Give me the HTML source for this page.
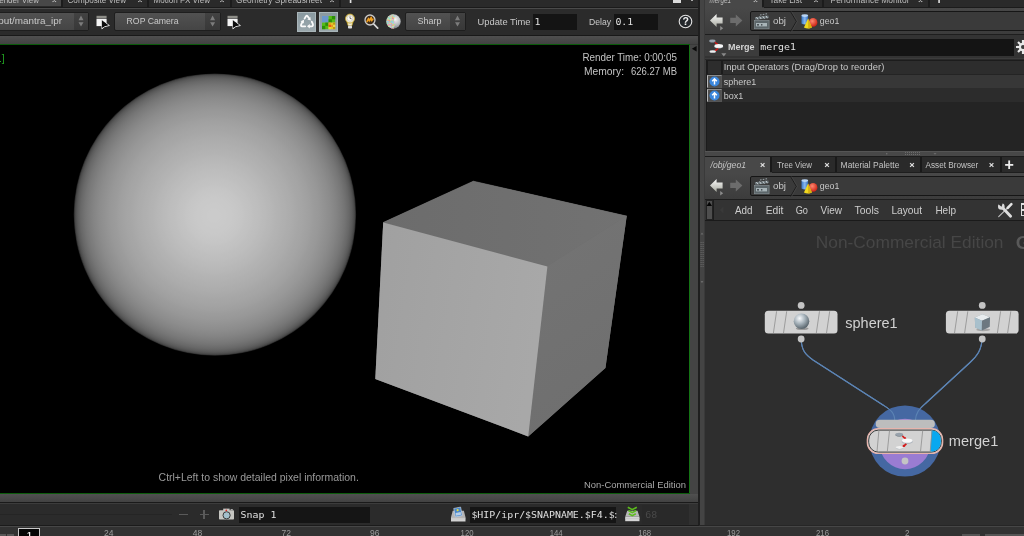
<!DOCTYPE html>
<html><head><meta charset="utf-8"><title>Houdini</title>
<style>
html,body{margin:0;padding:0;background:#3a3a3a;}
#root{position:relative;width:1024px;height:536px;overflow:hidden;background:#3a3a3a;font-family:'Liberation Sans', sans-serif;will-change:transform;}
#root div,#root svg{box-sizing:border-box;}
svg{position:absolute;overflow:visible;}
text{white-space:pre;}
</style></head><body><div id="root">
<div style="position:absolute;left:0px;top:0px;width:699px;height:7px;background:#2a2a2a;"></div>
<div style="position:absolute;left:0px;top:0px;width:61px;height:6.2px;background:#484848;"></div>
<div style="position:absolute;left:61px;top:0px;width:2px;height:7px;background:#1c1c1c;"></div>
<div style="position:absolute;left:146.5px;top:0px;width:2px;height:7px;background:#1c1c1c;"></div>
<div style="position:absolute;left:229.5px;top:0px;width:2px;height:7px;background:#1c1c1c;"></div>
<div style="position:absolute;left:339px;top:0px;width:2px;height:7px;background:#1c1c1c;"></div>
<div style="position:absolute;left:0px;top:7px;width:699px;height:1px;background:#1b1b1b;"></div>
<div style="position:absolute;left:61px;top:7px;width:638px;height:1px;background:#1b1b1b;"></div>
<div style="position:absolute;left:0px;top:8px;width:698px;height:1px;background:#4a4a4a;"></div>
<svg style="left:0;top:0" width="1024" height="536"><path d="M52.599999999999994,-1.5 L56.0,1.9 M56.0,-1.5 L52.599999999999994,1.9" stroke="#bcbcbc" stroke-width="1.1" fill="none"/></svg>
<svg style="left:0;top:0" width="1024" height="536"><path d="M138.3,-1.5 L141.7,1.9 M141.7,-1.5 L138.3,1.9" stroke="#bcbcbc" stroke-width="1.1" fill="none"/></svg>
<svg style="left:0;top:0" width="1024" height="536"><path d="M220.3,-1.5 L223.7,1.9 M223.7,-1.5 L220.3,1.9" stroke="#bcbcbc" stroke-width="1.1" fill="none"/></svg>
<svg style="left:0;top:0" width="1024" height="536"><path d="M330.3,-1.5 L333.7,1.9 M333.7,-1.5 L330.3,1.9" stroke="#bcbcbc" stroke-width="1.1" fill="none"/></svg>
<div style="position:absolute;left:672.5px;top:0px;width:8.5px;height:2.5px;background:#dcdcdc;"></div>
<div style="position:absolute;left:691px;top:0px;width:1.5px;height:1px;background:#aaa;"></div>
<div style="position:absolute;left:0px;top:9px;width:699px;height:26px;background:#2b2b2b;"></div>
<div style="position:absolute;left:0px;top:35px;width:699px;height:1px;background:#191919;"></div>
<div style="position:absolute;left:0px;top:36px;width:699px;height:8px;background:linear-gradient(#4f4f4f,#424242);"></div>
<div style="position:absolute;left:0px;top:43.7px;width:690px;height:1.5px;background:linear-gradient(#0a520a,#0a620a);"></div>
<div style="position:absolute;left:0px;top:45px;width:689px;height:448px;background:#000;"></div>
<div style="position:absolute;left:688.8px;top:45px;width:1.4px;height:449px;background:#147414;"></div>
<div style="position:absolute;left:0px;top:493px;width:690px;height:1px;background:#0c5c0c;"></div>
<div style="position:absolute;left:690px;top:45px;width:8px;height:449px;background:#444;"></div>
<div style="position:absolute;left:0px;top:494px;width:698px;height:8px;background:linear-gradient(#505050,#424242);"></div>
<div style="position:absolute;left:0px;top:502px;width:698px;height:1px;background:#1a1a1a;"></div>
<div style="position:absolute;left:0px;top:503px;width:698px;height:1px;background:#3c3c3c;"></div>
<div style="position:absolute;left:0px;top:504px;width:698px;height:21px;background:#2b2b2b;"></div>
<div style="position:absolute;left:698px;top:0px;width:1.7px;height:526px;background:#1f1f1f;"></div>
<div style="position:absolute;left:699.7px;top:0px;width:4.6px;height:526px;background:#444;"></div>
<div style="position:absolute;left:704.2px;top:0px;width:0.5px;height:526px;background:#3a3a3a;"></div>
<svg style="left:0;top:0" width="1024" height="536"><g fill="#6a6a6a"><rect x="700.6" y="242" width="1" height="1"/><rect x="702.6" y="242" width="1" height="1"/><rect x="700.6" y="244" width="1" height="1"/><rect x="702.6" y="244" width="1" height="1"/><rect x="700.6" y="246" width="1" height="1"/><rect x="702.6" y="246" width="1" height="1"/><rect x="700.6" y="248" width="1" height="1"/><rect x="702.6" y="248" width="1" height="1"/><rect x="700.6" y="250" width="1" height="1"/><rect x="702.6" y="250" width="1" height="1"/><rect x="700.6" y="252" width="1" height="1"/><rect x="702.6" y="252" width="1" height="1"/><rect x="700.6" y="254" width="1" height="1"/><rect x="702.6" y="254" width="1" height="1"/><rect x="700.6" y="256" width="1" height="1"/><rect x="702.6" y="256" width="1" height="1"/><rect x="700.6" y="258" width="1" height="1"/><rect x="702.6" y="258" width="1" height="1"/><rect x="700.6" y="260" width="1" height="1"/><rect x="702.6" y="260" width="1" height="1"/><rect x="700.6" y="262" width="1" height="1"/><rect x="702.6" y="262" width="1" height="1"/><rect x="700.6" y="264" width="1" height="1"/><rect x="702.6" y="264" width="1" height="1"/><rect x="700.6" y="266" width="1" height="1"/><rect x="702.6" y="266" width="1" height="1"/><path d="M700.6,234.6 L703.4,234.6 L702,232.4 Z"/><path d="M700.6,281 L703.4,281 L702,283.2 Z"/></g></svg>
<div style="position:absolute;left:-20px;top:12px;width:109px;height:18.5px;background:linear-gradient(#515151,#454545);border:1px solid #1e1e1e;border-radius:2px;"></div>
<div style="position:absolute;left:74px;top:13px;width:14px;height:16.5px;background:linear-gradient(#424242,#383838);"></div>
<svg style="left:0;top:0" width="1024" height="536"><path d="M78.5,20.2 L81.0,15.6 L83.5,20.2 Z M78.5,22.2 L81.0,26.6 L83.5,22.2 Z" fill="#7c7c7c"/></svg>
<div style="position:absolute;left:113.9px;top:12px;width:107.29999999999998px;height:18.5px;background:linear-gradient(#515151,#454545);border:1px solid #1e1e1e;border-radius:2px;"></div>
<div style="position:absolute;left:205px;top:13px;width:15.199999999999989px;height:16.5px;background:linear-gradient(#424242,#383838);"></div>
<svg style="left:0;top:0" width="1024" height="536"><path d="M210.1,20.2 L212.6,15.6 L215.1,20.2 Z M210.1,22.2 L212.6,26.6 L215.1,22.2 Z" fill="#7c7c7c"/></svg>
<div style="position:absolute;left:404.8px;top:12px;width:61.19999999999999px;height:18.5px;background:linear-gradient(#515151,#454545);border:1px solid #1e1e1e;border-radius:2px;"></div>
<div style="position:absolute;left:450px;top:13px;width:15px;height:16.5px;background:linear-gradient(#424242,#383838);"></div>
<svg style="left:0;top:0" width="1024" height="536"><path d="M455.0,20.2 L457.5,15.6 L460.0,20.2 Z M455.0,22.2 L457.5,26.6 L460.0,22.2 Z" fill="#7c7c7c"/></svg>
<svg style="left:95.5px;top:15px" width="16" height="16" viewBox="0 0 16 16">
<rect x="0.5" y="0.8" width="10.1" height="2.2" fill="#8e8e88"/>
<rect x="0.5" y="3.7" width="10.1" height="7.4" fill="#f4f4f4"/>
<path d="M5.9,5.3 L5.9,13.9 L8.6,11.7 L13.4,10.5 Z" fill="#0c0c0c" stroke="#f0f0f0" stroke-width="0.9" stroke-linejoin="round"/>
<path d="M5.9,5.3 L5.9,12.6 L8.3,10.9 L12,10 Z" fill="#0c0c0c"/>
</svg>
<svg style="left:226.7px;top:15px" width="16" height="16" viewBox="0 0 16 16">
<rect x="0.5" y="0.8" width="10.1" height="2.2" fill="#8e8e88"/>
<rect x="0.5" y="3.7" width="10.1" height="7.4" fill="#f4f4f4"/>
<path d="M5.9,5.3 L5.9,13.9 L8.6,11.7 L13.4,10.5 Z" fill="#0c0c0c" stroke="#f0f0f0" stroke-width="0.9" stroke-linejoin="round"/>
<path d="M5.9,5.3 L5.9,12.6 L8.3,10.9 L12,10 Z" fill="#0c0c0c"/>
</svg>
<div style="position:absolute;left:297px;top:12px;width:19px;height:19.5px;background:linear-gradient(#8999a0,#9ba8ad);border:1px solid #a9b5b9;"></div>
<div style="position:absolute;left:318.7px;top:12px;width:19.3px;height:19.5px;background:linear-gradient(#8999a0,#9ba8ad);border:1px solid #a9b5b9;"></div>
<svg style="left:297.5px;top:12.3px" width="18" height="18" viewBox="0 0 18 18">
<g fill="none" stroke="#fafafa" stroke-width="1.8" stroke-linejoin="round" stroke-linecap="round">
<path d="M6.6,6.6 L8,4.2 Q8.8,3.2 9.6,4.2 L10.6,5.8"/>
<path d="M13.8,9.6 L14.9,12.2 Q15.4,14.2 13.4,14.3 L11.6,14.3"/>
<path d="M7.2,14.3 L4.2,14.3 Q2.4,14.1 3.2,12.4 L4.2,10.4"/>
</g>
<g fill="#fafafa"><path d="M12.8,8.4 L9.4,7.4 L12.3,4.8 Z"/><path d="M9,14.3 L11.8,12 L11.8,16.6 Z"/><path d="M6,7.8 L2.6,9.2 L5.8,11.6 Z"/></g>
</svg>
<svg style="left:321.8px;top:15.6px" width="13.2" height="13.2" viewBox="0 0 12 12">
<rect x="0" y="0" width="6" height="6" fill="#6a96cc"/>
<rect x="6" y="0" width="6" height="6" fill="#58bc18"/><rect x="9" y="0" width="3" height="3" fill="#2c9008"/><rect x="6" y="3" width="3" height="3" fill="#2c9008"/>
<rect x="0" y="6" width="6" height="6" fill="#58bc18"/><rect x="3" y="6" width="3" height="3" fill="#2c9008"/><rect x="0" y="9" width="3" height="3" fill="#2c9008"/>
<rect x="6" y="6" width="6" height="6" fill="#e4c828"/>
<rect x="6" y="6" width="2" height="2" fill="#e8a020"/><rect x="10" y="6" width="2" height="2" fill="#c09810"/>
<rect x="6" y="8" width="2.4" height="2" fill="#ee5a10"/><rect x="8.4" y="8" width="1.6" height="2" fill="#e89028"/><rect x="10" y="8" width="2" height="2" fill="#ecd840"/>
<rect x="6" y="10" width="2" height="2" fill="#e8d838"/><rect x="10" y="10" width="2" height="2" fill="#c09810"/>
</svg>
<svg style="left:343px;top:12px" width="14" height="18" viewBox="0 0 14 18">
<path d="M3.9,9.8 L5.1,13.6 L8.9,13.6 L10.1,9.8 Z" fill="#f0ecd8" stroke="#c4a428" stroke-width="0.8"/>
<circle cx="7" cy="6.6" r="4.5" fill="#f2eedc" stroke="#c4a428" stroke-width="0.9"/>
<circle cx="7" cy="6.4" r="2.9" fill="#fafafa" stroke="#b8b098" stroke-width="0.5"/>
<path d="M7,4.4 L7,6.4 L8.6,6.9" stroke="#555" stroke-width="0.8" fill="none"/>
<rect x="5" y="13.6" width="4" height="2.9" rx="0.8" fill="#dedede"/>
</svg>
<svg style="left:362px;top:12px" width="18" height="18" viewBox="0 0 18 18">
<line x1="11.8" y1="12.2" x2="15.7" y2="16.1" stroke="#d8d8d8" stroke-width="1.7" stroke-linecap="round"/>
<circle cx="8" cy="8" r="5" fill="#3e2c1a" stroke="#cccccc" stroke-width="1.3"/>
<path d="M5,9.6 L6.6,6.4 L7.4,9 L9.2,5.2 L9.6,8.8 L11,7" stroke="#f0a020" stroke-width="1.5" fill="none" stroke-linejoin="round" stroke-linecap="round"/>
</svg>
<svg style="left:385.9px;top:14.4px" width="15" height="15" viewBox="0 0 15 15">
<defs><radialGradient id="bg1" cx="0.62" cy="0.36" r="0.7"><stop offset="0" stop-color="#f6f6f6"/><stop offset="0.55" stop-color="#b4b8bc"/><stop offset="1" stop-color="#6c7278"/></radialGradient>
<clipPath id="bc1"><circle cx="7.5" cy="7.5" r="7.2"/></clipPath></defs>
<circle cx="7.5" cy="7.5" r="7.2" fill="url(#bg1)"/>
<g clip-path="url(#bc1)"><rect x="0" y="0" width="7.6" height="15" fill="#c0d4b8"/><rect x="2.9" y="2.9" width="1.5" height="1.5" fill="#f0a0e0"/><rect x="0.9" y="12.0" width="1.5" height="1.5" fill="#a0b8f0"/><rect x="3.2" y="1.6" width="1.5" height="1.5" fill="#88d8f0"/><rect x="2.1" y="2.0" width="1.5" height="1.5" fill="#a8e890"/><rect x="1.1" y="2.0" width="1.5" height="1.5" fill="#a8e890"/><rect x="1.0" y="8.5" width="1.5" height="1.5" fill="#90e8c8"/><rect x="5.0" y="8.7" width="1.5" height="1.5" fill="#e8a0b8"/><rect x="4.6" y="6.2" width="1.5" height="1.5" fill="#90e8c8"/><rect x="0.9" y="12.5" width="1.5" height="1.5" fill="#f0b880"/><rect x="3.5" y="8.2" width="1.5" height="1.5" fill="#e0e0a0"/><rect x="2.8" y="11.9" width="1.5" height="1.5" fill="#f0e890"/><rect x="1.3" y="8.6" width="1.5" height="1.5" fill="#90e8c8"/><rect x="3.2" y="8.2" width="1.5" height="1.5" fill="#a0b8f0"/><rect x="4.6" y="9.2" width="1.5" height="1.5" fill="#f08888"/><rect x="5.4" y="6.6" width="1.5" height="1.5" fill="#c8a0e8"/><rect x="3.9" y="13.4" width="1.5" height="1.5" fill="#c8a0e8"/><rect x="2.7" y="11.6" width="1.5" height="1.5" fill="#b0f0b0"/><rect x="6.1" y="1.9" width="1.5" height="1.5" fill="#f0b880"/><rect x="4.3" y="12.7" width="1.5" height="1.5" fill="#b0f0b0"/><rect x="3.7" y="9.1" width="1.5" height="1.5" fill="#a0b8f0"/><rect x="1.4" y="6.5" width="1.5" height="1.5" fill="#c8a0e8"/><rect x="1.7" y="7.4" width="1.5" height="1.5" fill="#e8a0b8"/><rect x="7.3" y="1.9" width="1.5" height="1.5" fill="#88d8f0"/><rect x="4.6" y="12.7" width="1.5" height="1.5" fill="#c8a0e8"/><rect x="3.0" y="5.6" width="1.5" height="1.5" fill="#f08888"/><rect x="4.7" y="7.0" width="1.5" height="1.5" fill="#a0b8f0"/><rect x="7.2" y="7.2" width="1.5" height="1.5" fill="#f0a0e0"/><rect x="1.1" y="10.7" width="1.5" height="1.5" fill="#f0b880"/><rect x="5.1" y="14.3" width="1.5" height="1.5" fill="#f08888"/><rect x="2.6" y="6.0" width="1.5" height="1.5" fill="#f0a0e0"/><rect x="3.0" y="13.6" width="1.5" height="1.5" fill="#c8a0e8"/><rect x="1.8" y="2.4" width="1.5" height="1.5" fill="#e8a0b8"/><rect x="2.1" y="4.7" width="1.5" height="1.5" fill="#b0f0b0"/><rect x="2.3" y="6.1" width="1.5" height="1.5" fill="#f08888"/><rect x="1.2" y="6.9" width="1.5" height="1.5" fill="#88d8f0"/><rect x="2.5" y="2.7" width="1.5" height="1.5" fill="#a8e890"/><rect x="6.6" y="4.6" width="1.5" height="1.5" fill="#a8e890"/><rect x="7.5" y="10.1" width="1.5" height="1.5" fill="#a8e890"/><rect x="7.3" y="2.9" width="1.5" height="1.5" fill="#f0e890"/><rect x="1.7" y="9.8" width="1.5" height="1.5" fill="#e8a0b8"/><rect x="4.0" y="8.8" width="1.5" height="1.5" fill="#f0b880"/><rect x="2.6" y="2.8" width="1.5" height="1.5" fill="#88d8f0"/><rect x="3.2" y="8.5" width="1.5" height="1.5" fill="#f0e890"/><rect x="5.4" y="7.8" width="1.5" height="1.5" fill="#e0e0a0"/><rect x="5.2" y="10.9" width="1.5" height="1.5" fill="#f08888"/><rect x="6.9" y="11.4" width="1.5" height="1.5" fill="#f0a0e0"/><rect x="6.2" y="6.1" width="1.5" height="1.5" fill="#a8e890"/><rect x="3.4" y="7.3" width="1.5" height="1.5" fill="#a8e890"/><rect x="1.0" y="1.7" width="1.5" height="1.5" fill="#90e8c8"/><rect x="3.7" y="2.3" width="1.5" height="1.5" fill="#e0e0a0"/><rect x="1.0" y="0.8" width="1.5" height="1.5" fill="#f0e890"/><rect x="4.4" y="13.7" width="1.5" height="1.5" fill="#e0e0a0"/><rect x="0.8" y="12.7" width="1.5" height="1.5" fill="#e0e0a0"/><rect x="3.2" y="9.4" width="1.5" height="1.5" fill="#c8a0e8"/><rect x="4.8" y="7.2" width="1.5" height="1.5" fill="#a0b8f0"/><rect x="6.5" y="14.3" width="1.5" height="1.5" fill="#f08888"/><rect x="4.0" y="5.0" width="1.5" height="1.5" fill="#f0e890"/><rect x="1.3" y="5.5" width="1.5" height="1.5" fill="#f0b880"/><rect x="4.0" y="10.2" width="1.5" height="1.5" fill="#88d8f0"/><rect x="0.8" y="13.7" width="1.5" height="1.5" fill="#88d8f0"/><rect x="3.1" y="10.2" width="1.5" height="1.5" fill="#e8a0b8"/><rect x="5.9" y="4.9" width="1.5" height="1.5" fill="#f0a0e0"/><rect x="6.6" y="10.3" width="1.5" height="1.5" fill="#f0b880"/><rect x="4.2" y="13.2" width="1.5" height="1.5" fill="#c8a0e8"/><rect x="6.0" y="8.0" width="1.5" height="1.5" fill="#88d8f0"/><rect x="2.9" y="3.8" width="1.5" height="1.5" fill="#90e8c8"/><rect x="6.2" y="11.9" width="1.5" height="1.5" fill="#b0f0b0"/><rect x="6.2" y="3.5" width="1.5" height="1.5" fill="#f08888"/><rect x="3.1" y="1.2" width="1.5" height="1.5" fill="#e8a0b8"/><rect x="6.1" y="7.2" width="1.5" height="1.5" fill="#90e8c8"/><rect x="7.6" y="0" width="8" height="15" fill="url(#bg1)" opacity="0"/></g>
</svg>
<div style="position:absolute;left:533px;top:14px;width:44px;height:16.3px;background:#141414;"></div>
<div style="position:absolute;left:614.3px;top:14px;width:43.7px;height:16.3px;background:#141414;"></div>
<svg style="left:677.5px;top:13.5px" width="15" height="15" viewBox="0 0 15 15">
<circle cx="7.5" cy="7.5" r="6.3" fill="#23272b" stroke="#e4e4e4" stroke-width="1.1"/></svg>
<div style="position:absolute;left:0px;top:60.5px;width:1px;height:1.2px;background:#22a022;"></div>
<svg style="left:690px;top:45px" width="8" height="8"><path d="M6.6,1 L6.6,6.4 L1.8,3.7 Z" fill="#0a0a0a"/></svg>
<svg style="left:0;top:0" width="700" height="536" viewBox="0 0 700 536">
<defs><radialGradient id="sg" cx="0.5" cy="0.5" r="0.5" fx="0.497" fy="0.504"><stop offset="0.000" stop-color="rgb(203,203,203)"/><stop offset="0.020" stop-color="rgb(203,203,203)"/><stop offset="0.040" stop-color="rgb(203,203,203)"/><stop offset="0.060" stop-color="rgb(202,202,202)"/><stop offset="0.080" stop-color="rgb(202,202,202)"/><stop offset="0.100" stop-color="rgb(201,201,201)"/><stop offset="0.120" stop-color="rgb(201,201,201)"/><stop offset="0.140" stop-color="rgb(200,200,200)"/><stop offset="0.160" stop-color="rgb(199,199,199)"/><stop offset="0.180" stop-color="rgb(198,198,198)"/><stop offset="0.200" stop-color="rgb(197,197,197)"/><stop offset="0.220" stop-color="rgb(195,195,195)"/><stop offset="0.240" stop-color="rgb(194,194,194)"/><stop offset="0.260" stop-color="rgb(193,193,193)"/><stop offset="0.280" stop-color="rgb(191,191,191)"/><stop offset="0.300" stop-color="rgb(190,190,190)"/><stop offset="0.320" stop-color="rgb(189,189,189)"/><stop offset="0.340" stop-color="rgb(187,187,187)"/><stop offset="0.360" stop-color="rgb(186,186,186)"/><stop offset="0.380" stop-color="rgb(184,184,184)"/><stop offset="0.400" stop-color="rgb(183,183,183)"/><stop offset="0.420" stop-color="rgb(181,181,181)"/><stop offset="0.440" stop-color="rgb(179,179,179)"/><stop offset="0.460" stop-color="rgb(178,178,178)"/><stop offset="0.480" stop-color="rgb(176,176,176)"/><stop offset="0.500" stop-color="rgb(175,175,175)"/><stop offset="0.520" stop-color="rgb(173,173,173)"/><stop offset="0.540" stop-color="rgb(172,172,172)"/><stop offset="0.560" stop-color="rgb(170,170,170)"/><stop offset="0.580" stop-color="rgb(168,168,168)"/><stop offset="0.600" stop-color="rgb(166,166,166)"/><stop offset="0.620" stop-color="rgb(165,165,165)"/><stop offset="0.640" stop-color="rgb(163,163,163)"/><stop offset="0.660" stop-color="rgb(161,161,161)"/><stop offset="0.680" stop-color="rgb(159,159,159)"/><stop offset="0.700" stop-color="rgb(156,156,156)"/><stop offset="0.720" stop-color="rgb(154,154,154)"/><stop offset="0.740" stop-color="rgb(152,152,152)"/><stop offset="0.760" stop-color="rgb(149,149,149)"/><stop offset="0.780" stop-color="rgb(146,146,146)"/><stop offset="0.800" stop-color="rgb(143,143,143)"/><stop offset="0.820" stop-color="rgb(140,140,140)"/><stop offset="0.840" stop-color="rgb(136,136,136)"/><stop offset="0.860" stop-color="rgb(132,132,132)"/><stop offset="0.880" stop-color="rgb(127,127,127)"/><stop offset="0.900" stop-color="rgb(122,122,122)"/><stop offset="0.910" stop-color="rgb(119,119,119)"/><stop offset="0.920" stop-color="rgb(116,116,116)"/><stop offset="0.930" stop-color="rgb(112,112,112)"/><stop offset="0.940" stop-color="rgb(108,108,108)"/><stop offset="0.950" stop-color="rgb(104,104,104)"/><stop offset="0.960" stop-color="rgb(98,98,98)"/><stop offset="0.970" stop-color="rgb(92,92,92)"/><stop offset="0.980" stop-color="rgb(83,83,83)"/><stop offset="0.990" stop-color="rgb(70,70,70)"/><stop offset="1.000" stop-color="rgb(30,30,30)"/></radialGradient>
<linearGradient id="bf" x1="0" y1="0" x2="1" y2="0.2"><stop offset="0" stop-color="#a0a0a0"/><stop offset="1" stop-color="#a8a8a8"/></linearGradient>
<linearGradient id="bt" x1="0" y1="0" x2="1" y2="0"><stop offset="0" stop-color="#6c6c6c"/><stop offset="1" stop-color="#727272"/></linearGradient>
<linearGradient id="br" x1="0" y1="0" x2="0.3" y2="1"><stop offset="0" stop-color="#747474"/><stop offset="1" stop-color="#6f6f6f"/></linearGradient>
</defs>
<circle cx="214.9" cy="214.6" r="141.2" fill="url(#sg)"/>
<polygon points="383.2,222.5 473.3,181.2 626.7,216.1 605.4,368 528.2,436.4 375.3,378.9" fill="#717171"/>
<polygon points="383.2,222.5 473.3,181.2 626.7,216.1 547.4,266.5" fill="url(#bt)" stroke="#707070" stroke-width="0.6"/>
<polygon points="547.4,266.5 626.7,216.1 605.4,368 528.2,436.4" fill="url(#br)"/>
<polygon points="383.2,222.5 547.4,266.5 528.2,436.4 375.3,378.9" fill="url(#bf)"/>
</svg>
<div style="position:absolute;left:0px;top:513.5px;width:172px;height:1.2px;background:#252525;"></div>
<div style="position:absolute;left:178.8px;top:513.5px;width:9.4px;height:1.8px;background:#5a5a5a;"></div>
<div style="position:absolute;left:199.6px;top:513.5px;width:9.4px;height:1.8px;background:#5a5a5a;"></div>
<div style="position:absolute;left:203.4px;top:509.7px;width:1.8px;height:9.4px;background:#5a5a5a;"></div>
<svg style="left:218px;top:507px" width="17" height="14" viewBox="0 0 17 14">
<rect x="1" y="3.2" width="15" height="9.4" rx="0.8" fill="#c6c6c2"/>
<rect x="5.2" y="1.6" width="6.4" height="2.4" fill="#c6c6c2"/><rect x="12.6" y="2" width="2.2" height="1.4" fill="#aaa"/>
<circle cx="8.6" cy="8.3" r="3.6" fill="#a4c0cc" stroke="#3a3a3a" stroke-width="1"/>
<circle cx="8.3" cy="3.3" r="0.85" fill="#e02828"/>
</svg>
<div style="position:absolute;left:238.7px;top:507.3px;width:131.5px;height:15.8px;background:#151515;"></div>
<svg style="left:450px;top:506px" width="17" height="16" viewBox="0 0 17 16">
<path d="M2.7,4.8 L13.9,4.8 L15.5,11.2 L1,11.2 Z" fill="#b4b4b4"/>
<rect x="1" y="11.2" width="14.5" height="4.3" fill="#d2d2d2"/>
<rect x="1" y="12.6" width="14.5" height="0.6" fill="#c0c0c0"/>
<g transform="rotate(-11 8 6)"><rect x="4.5" y="1.7" width="7" height="8.6" fill="#4a86c8" stroke="#c8d8e8" stroke-width="0.6"/>
<rect x="5.4" y="6.6" width="5.2" height="2.6" fill="#b8d0e8"/><circle cx="8" cy="4.1" r="1.1" fill="#e4dc40"/></g>
</svg>
<div style="position:absolute;left:470px;top:507.3px;width:146.3px;height:15.8px;background:#151515;"></div>
<svg style="left:623.5px;top:506px" width="17" height="17" viewBox="0 0 17 17">
<path d="M3.2,4.7 L13.5,4.7 L15.5,10.8 L1.2,10.8 Z" fill="#b8b8b8"/>
<rect x="1.2" y="10.8" width="14.3" height="4.4" fill="#d4d4d4"/>
<rect x="1.2" y="12.4" width="14.3" height="0.6" fill="#c2c2c2"/>
<g fill="none" stroke="#5cbc1c" stroke-width="1.6"><path d="M3.8,1.2 L8.3,3.7 L12.8,1.2"/><path d="M4.4,4.5 L8.3,6.7 L12.2,4.5"/><path d="M4.8,7.7 L8.3,9.6 L11.8,7.7"/></g>
</svg>
<div style="position:absolute;left:642px;top:505px;width:47px;height:19px;background:#292929;"></div>
<div style="position:absolute;left:689px;top:504px;width:9px;height:21px;background:#303030;"></div>
<div style="position:absolute;left:0px;top:524.6px;width:699px;height:1.6px;background:#1b1b1b;"></div>
<div style="position:absolute;left:699px;top:525.4px;width:325px;height:0.8px;background:#262626;"></div>
<div style="position:absolute;left:0px;top:526.2px;width:1024px;height:1px;background:#464646;"></div>
<div style="position:absolute;left:0px;top:527.2px;width:1024px;height:9px;background:#323232;"></div>
<div style="position:absolute;left:18px;top:528px;width:21.5px;height:9px;background:#050505;border:1px solid #c8c8c8;"></div>
<div style="position:absolute;left:0px;top:533.5px;width:6px;height:3px;background:#585858;"></div>
<div style="position:absolute;left:7px;top:533.5px;width:7px;height:3px;background:#585858;"></div>
<div style="position:absolute;left:961.5px;top:533.5px;width:18.5px;height:3px;background:#555;"></div>
<div style="position:absolute;left:985px;top:533.5px;width:40px;height:3px;background:#555;"></div>
<div style="position:absolute;left:704.5px;top:0px;width:320px;height:7px;background:#2a2a2a;"></div>
<div style="position:absolute;left:704.5px;top:0px;width:57px;height:8px;background:#484848;"></div>
<div style="position:absolute;left:761.5px;top:0px;width:2px;height:7px;background:#1c1c1c;"></div>
<div style="position:absolute;left:822px;top:0px;width:2px;height:7px;background:#1c1c1c;"></div>
<div style="position:absolute;left:927.5px;top:0px;width:2px;height:7px;background:#1c1c1c;"></div>
<div style="position:absolute;left:763.5px;top:7px;width:262px;height:1px;background:#1b1b1b;"></div>
<svg style="left:0;top:0" width="1024" height="536"><path d="M753.8,-1.5 L757.2,1.9 M757.2,-1.5 L753.8,1.9" stroke="#bcbcbc" stroke-width="1.1" fill="none"/></svg>
<svg style="left:0;top:0" width="1024" height="536"><path d="M814.3,-1.5 L817.7,1.9 M817.7,-1.5 L814.3,1.9" stroke="#bcbcbc" stroke-width="1.1" fill="none"/></svg>
<svg style="left:0;top:0" width="1024" height="536"><path d="M918.8,-1.5 L922.2,1.9 M922.2,-1.5 L918.8,1.9" stroke="#bcbcbc" stroke-width="1.1" fill="none"/></svg>
<div style="position:absolute;left:704.5px;top:8px;width:320px;height:26px;background:linear-gradient(#484848,#3c3c3c);"></div>
<svg style="left:709px;top:11.5px" width="36" height="20" viewBox="0 0 36 20">
<defs><linearGradient id="ag11.5" x1="0" y1="0" x2="0" y2="1"><stop offset="0" stop-color="#fafafa"/><stop offset="1" stop-color="#a8aaa0"/></linearGradient></defs>
<path d="M1,8.4 L7.6,2 L7.6,5.6 L13.6,5.6 L13.6,11.4 L7.6,11.4 L7.6,15 Z" fill="url(#ag11.5)"/>
<path d="M11.2,14 L11.2,18.4 L14.2,16.2 Z" fill="#8c8c8c"/>
<path d="M33.4,8.4 L26.8,2.4 L26.8,5.8 L21.2,5.8 L21.2,11 L26.8,11 L26.8,14.4 Z" fill="#6c6c6c"/>
</svg>
<div style="position:absolute;left:750.3px;top:10.5px;width:280px;height:20px;background:#3a3a3a;border:1px solid #161616;border-radius:2px;"></div>
<svg style="left:754px;top:12.5px" width="90" height="17" viewBox="0 0 90 17">
<g><rect x="0.5" y="7.4" width="14.6" height="8.4" fill="#5c666a"/><rect x="0.5" y="7.4" width="14.6" height="8.4" fill="none" stroke="#8a9498" stroke-width="0.6"/>
<path d="M0.8,4.2 L14.4,2.4 L14.8,5 L1.2,6.8 Z" fill="#6a7478"/>
<path d="M2.4,4 L4,6.4 M5.6,3.6 L7.2,6 M8.8,3.2 L10.4,5.6 M12,2.8 L13.4,5.2" stroke="#c8d0d4" stroke-width="1"/>
<path d="M6,2 L13.6,0.6" stroke="#9aa4a8" stroke-width="1.1" stroke-dasharray="1.6 1.2"/>
<rect x="2" y="10" width="11" height="3.4" fill="#a8b4b8"/><rect x="3" y="11" width="2" height="1.6" fill="#4c5458"/><rect x="7" y="11" width="1.4" height="1.6" fill="#4c5458"/>
</g>
<path d="M36.6,-1.4 L42.4,8.4 L36.6,18.4" fill="none" stroke="#1c1c1c" stroke-width="1"/>
<path d="M37.6,-1.4 L43.4,8.4 L37.6,18.4" fill="none" stroke="#484848" stroke-width="0.8"/>
<g transform="translate(46.5,0)">
<defs><linearGradient id="cy10.5" x1="0" y1="0" x2="1" y2="0"><stop offset="0" stop-color="#3a78c8"/><stop offset="0.5" stop-color="#8ab8f0"/><stop offset="1" stop-color="#3068b8"/></linearGradient>
<radialGradient id="rs10.5" cx="0.4" cy="0.35" r="0.7"><stop offset="0" stop-color="#ff8a70"/><stop offset="1" stop-color="#c81c10"/></radialGradient></defs>
<path d="M1,2.6 L1,10.6 Q4.2,12.6 7.6,10.6 L7.6,2.6 Z" fill="url(#cy10.5)"/><ellipse cx="4.3" cy="2.6" rx="3.3" ry="1.3" fill="#b8d4f4"/>
<circle cx="12.6" cy="9.4" r="4.3" fill="url(#rs10.5)"/>
<path d="M7.6,5.6 L11.4,14.4 Q7.4,16.4 3.4,14.4 Z" fill="#f0d820"/><path d="M7.6,5.6 L11.4,14.4 Q9.6,15.4 7.6,15.5 Z" fill="#d8b010"/>
</g></svg>
<div style="position:absolute;left:704.5px;top:33.5px;width:320px;height:1.5px;background:#1e1e1e;"></div>
<div style="position:absolute;left:704.5px;top:35px;width:320px;height:24px;background:#333;"></div>
<div style="position:absolute;left:704.5px;top:35.4px;width:54px;height:20.4px;background:#3c3c3c;"></div>
<div style="position:absolute;left:704.5px;top:57.6px;width:320px;height:1.4px;background:#3c3c3c;"></div>
<svg style="left:708.6px;top:38.6px" width="16.0" height="14.4" viewBox="0 0 20 18">
<ellipse cx="4.2" cy="2.4" rx="3.9" ry="1.7" fill="#98a2ac"/><path d="M0.3,2.4 Q4.2,5.6 8.1,2.4 L8.1,3.2 Q4.2,6.2 0.3,3.2 Z" fill="#7c868e"/>
<path d="M7.4,4 L10.2,6.6" stroke="#d41818" stroke-width="1.7"/><path d="M11.6,8 L8.4,7.4 L10.8,5 Z" fill="#d41818"/>
<path d="M6.8,8.6 L6.8,10.4 Q12.2,13.6 17.6,10.4 L17.6,8.6 Z" fill="#aeb6be"/>
<ellipse cx="12.2" cy="8.6" rx="5.4" ry="2.2" fill="#f8f8f8"/>
<path d="M11.4,11.8 L8.8,14" stroke="#d41818" stroke-width="1.7"/><path d="M7.2,15.4 L8,12.4 L10.4,14.6 Z" fill="#d41818"/>
<ellipse cx="4.6" cy="15.6" rx="4" ry="1.6" fill="#f0f0f0"/><path d="M0.6,15.6 Q4.6,18.4 8.6,15.6 L8.6,16.2 Q4.6,19 0.6,16.2 Z" fill="#b8bec4"/>
</svg>
<svg style="left:720.5px;top:53px" width="6" height="4"><path d="M0.3,0.3 L5.3,0.3 L2.8,3.4 Z" fill="#8a8a8a"/></svg>
<div style="position:absolute;left:758.5px;top:39px;width:255px;height:16.5px;background:#141414;"></div>
<svg style="left:1016px;top:40px" width="14" height="14" viewBox="0 0 14 14">
<g stroke="#e8e8e8" stroke-width="2.2" stroke-linecap="butt"><line x1="7" y1="0" x2="7" y2="14"/><line x1="0" y1="7" x2="14" y2="7"/><line x1="2" y1="2" x2="12" y2="12"/><line x1="12" y1="2" x2="2" y2="12"/></g>
<circle cx="7" cy="7" r="4.2" fill="#e8e8e8"/><circle cx="7" cy="7" r="2" fill="#3a3a3a"/></svg>
<div style="position:absolute;left:704.5px;top:59px;width:320px;height:1px;background:#2a2a2a;"></div>
<div style="position:absolute;left:706.5px;top:60px;width:320px;height:14px;background:#2d2d2d;"></div>
<div style="position:absolute;left:706.5px;top:60px;width:1px;height:14px;background:#1c1c1c;"></div>
<div style="position:absolute;left:721px;top:60px;width:1.5px;height:14px;background:#1c1c1c;"></div>
<div style="position:absolute;left:706.5px;top:59.5px;width:320px;height:1px;background:#1c1c1c;"></div>
<div style="position:absolute;left:706.5px;top:73.5px;width:320px;height:1px;background:#242424;"></div>
<div style="position:absolute;left:706.5px;top:74.5px;width:320px;height:13.5px;background:#373737;"></div>
<div style="position:absolute;left:706.5px;top:88px;width:320px;height:14px;background:#2c2c2c;"></div>
<div style="position:absolute;left:706.5px;top:102px;width:320px;height:48.5px;background:#242424;"></div>
<div style="position:absolute;left:705.5px;top:60px;width:1px;height:91px;background:#1c1c1c;"></div>
<div style="position:absolute;left:707px;top:74.5px;width:14.5px;height:13.5px;background:#505050;border-left:1px solid #b8b8b8;border-top:1px solid #8a8a8a;border-right:1px solid #555;border-bottom:1px solid #555;"></div>
<svg style="left:709px;top:76.0px" width="11" height="11" viewBox="0 0 11 11"><circle cx="5.5" cy="5.5" r="5" fill="#3a86dc"/>
<path d="M5.5,8.6 L5.5,3 M3.2,5.2 L5.5,2.8 L7.8,5.2" fill="none" stroke="#fff" stroke-width="1.5"/></svg>
<div style="position:absolute;left:707px;top:88.5px;width:14.5px;height:13.5px;background:#505050;border-left:1px solid #b8b8b8;border-top:1px solid #8a8a8a;border-right:1px solid #555;border-bottom:1px solid #555;"></div>
<svg style="left:709px;top:90.0px" width="11" height="11" viewBox="0 0 11 11"><circle cx="5.5" cy="5.5" r="5" fill="#3a86dc"/>
<path d="M5.5,8.6 L5.5,3 M3.2,5.2 L5.5,2.8 L7.8,5.2" fill="none" stroke="#fff" stroke-width="1.5"/></svg>
<div style="position:absolute;left:704.5px;top:150.5px;width:320px;height:5.5px;background:#484848;"></div>
<div style="position:absolute;left:704.5px;top:150.5px;width:320px;height:1px;background:#555;"></div>
<svg style="left:0;top:0" width="1024" height="536"><g fill="#6c6c6c"><rect x="905" y="152" width="1" height="1"/><rect x="905" y="154" width="1" height="1"/><rect x="907" y="152" width="1" height="1"/><rect x="907" y="154" width="1" height="1"/><rect x="909" y="152" width="1" height="1"/><rect x="909" y="154" width="1" height="1"/><rect x="911" y="152" width="1" height="1"/><rect x="911" y="154" width="1" height="1"/><rect x="913" y="152" width="1" height="1"/><rect x="913" y="154" width="1" height="1"/><rect x="915" y="152" width="1" height="1"/><rect x="915" y="154" width="1" height="1"/><rect x="917" y="152" width="1" height="1"/><rect x="917" y="154" width="1" height="1"/><rect x="919" y="152" width="1" height="1"/><rect x="919" y="154" width="1" height="1"/><rect x="886" y="153" width="1.4" height="1.4"/><path d="M933.5,153 L936.5,153 L935,154.8 Z"/></g></svg>
<div style="position:absolute;left:704.5px;top:156px;width:320px;height:1px;background:#1c1c1c;"></div>
<div style="position:absolute;left:704.5px;top:157px;width:320px;height:15px;background:#2a2a2a;"></div>
<div style="position:absolute;left:704.5px;top:157px;width:65px;height:15.5px;background:#484848;"></div>
<div style="position:absolute;left:769.5px;top:157px;width:2px;height:15px;background:#191919;"></div>
<div style="position:absolute;left:834.5px;top:157px;width:2px;height:15px;background:#191919;"></div>
<div style="position:absolute;left:919.5px;top:157px;width:2px;height:15px;background:#191919;"></div>
<div style="position:absolute;left:999.5px;top:157px;width:2px;height:15px;background:#191919;"></div>
<div style="position:absolute;left:771.5px;top:171.5px;width:254px;height:1px;background:#1e1e1e;"></div>
<svg style="left:0;top:0" width="1024" height="536"><path d="M760.7,163.1 L764.5,166.9 M764.5,163.1 L760.7,166.9" stroke="#dcdcdc" stroke-width="1.25" fill="none"/></svg>
<svg style="left:0;top:0" width="1024" height="536"><path d="M825.1,163.1 L828.9,166.9 M828.9,163.1 L825.1,166.9" stroke="#dcdcdc" stroke-width="1.25" fill="none"/></svg>
<svg style="left:0;top:0" width="1024" height="536"><path d="M910.1,163.1 L913.9,166.9 M913.9,163.1 L910.1,166.9" stroke="#dcdcdc" stroke-width="1.25" fill="none"/></svg>
<svg style="left:0;top:0" width="1024" height="536"><path d="M989.6,163.1 L993.4,166.9 M993.4,163.1 L989.6,166.9" stroke="#dcdcdc" stroke-width="1.25" fill="none"/></svg>
<div style="position:absolute;left:704.5px;top:172.5px;width:320px;height:26px;background:linear-gradient(#484848,#3c3c3c);"></div>
<svg style="left:709px;top:176.5px" width="36" height="20" viewBox="0 0 36 20">
<defs><linearGradient id="ag176.5" x1="0" y1="0" x2="0" y2="1"><stop offset="0" stop-color="#fafafa"/><stop offset="1" stop-color="#a8aaa0"/></linearGradient></defs>
<path d="M1,8.4 L7.6,2 L7.6,5.6 L13.6,5.6 L13.6,11.4 L7.6,11.4 L7.6,15 Z" fill="url(#ag176.5)"/>
<path d="M11.2,14 L11.2,18.4 L14.2,16.2 Z" fill="#8c8c8c"/>
<path d="M33.4,8.4 L26.8,2.4 L26.8,5.8 L21.2,5.8 L21.2,11 L26.8,11 L26.8,14.4 Z" fill="#6c6c6c"/>
</svg>
<div style="position:absolute;left:750.3px;top:175.5px;width:280px;height:20px;background:#3a3a3a;border:1px solid #161616;border-radius:2px;"></div>
<svg style="left:754px;top:177.5px" width="90" height="17" viewBox="0 0 90 17">
<g><rect x="0.5" y="7.4" width="14.6" height="8.4" fill="#5c666a"/><rect x="0.5" y="7.4" width="14.6" height="8.4" fill="none" stroke="#8a9498" stroke-width="0.6"/>
<path d="M0.8,4.2 L14.4,2.4 L14.8,5 L1.2,6.8 Z" fill="#6a7478"/>
<path d="M2.4,4 L4,6.4 M5.6,3.6 L7.2,6 M8.8,3.2 L10.4,5.6 M12,2.8 L13.4,5.2" stroke="#c8d0d4" stroke-width="1"/>
<path d="M6,2 L13.6,0.6" stroke="#9aa4a8" stroke-width="1.1" stroke-dasharray="1.6 1.2"/>
<rect x="2" y="10" width="11" height="3.4" fill="#a8b4b8"/><rect x="3" y="11" width="2" height="1.6" fill="#4c5458"/><rect x="7" y="11" width="1.4" height="1.6" fill="#4c5458"/>
</g>
<path d="M36.6,-1.4 L42.4,8.4 L36.6,18.4" fill="none" stroke="#1c1c1c" stroke-width="1"/>
<path d="M37.6,-1.4 L43.4,8.4 L37.6,18.4" fill="none" stroke="#484848" stroke-width="0.8"/>
<g transform="translate(46.5,0)">
<defs><linearGradient id="cy175.5" x1="0" y1="0" x2="1" y2="0"><stop offset="0" stop-color="#3a78c8"/><stop offset="0.5" stop-color="#8ab8f0"/><stop offset="1" stop-color="#3068b8"/></linearGradient>
<radialGradient id="rs175.5" cx="0.4" cy="0.35" r="0.7"><stop offset="0" stop-color="#ff8a70"/><stop offset="1" stop-color="#c81c10"/></radialGradient></defs>
<path d="M1,2.6 L1,10.6 Q4.2,12.6 7.6,10.6 L7.6,2.6 Z" fill="url(#cy175.5)"/><ellipse cx="4.3" cy="2.6" rx="3.3" ry="1.3" fill="#b8d4f4"/>
<circle cx="12.6" cy="9.4" r="4.3" fill="url(#rs175.5)"/>
<path d="M7.6,5.6 L11.4,14.4 Q7.4,16.4 3.4,14.4 Z" fill="#f0d820"/><path d="M7.6,5.6 L11.4,14.4 Q9.6,15.4 7.6,15.5 Z" fill="#d8b010"/>
</g></svg>
<div style="position:absolute;left:704.5px;top:198.5px;width:320px;height:1.5px;background:#1e1e1e;"></div>
<div style="position:absolute;left:704.5px;top:200px;width:320px;height:20px;background:#333;"></div>
<div style="position:absolute;left:705.5px;top:200px;width:7px;height:20px;background:#4e4e4e;border:1px solid #222;"></div>
<svg style="left:706px;top:201px" width="7" height="6"><path d="M0.6,5 L3.3,0.8 L6,5 Z" fill="#050505"/></svg>
<div style="position:absolute;left:713px;top:200px;width:1px;height:20px;background:#1c1c1c;"></div>
<svg style="left:719px;top:206px" width="5" height="8"><path d="M4.5,0.5 L0.8,4 L4.5,7.5 Z" fill="#393939"/></svg>
<svg style="left:997px;top:202px" width="17" height="17" viewBox="0 0 17 17">
<line x1="10.4" y1="6.2" x2="1.7" y2="14.7" stroke="#c4c4c4" stroke-width="1.1" stroke-linecap="round"/>
<line x1="14.4" y1="2.2" x2="10.6" y2="6" stroke="#e6e6e6" stroke-width="2.5" stroke-linecap="round"/>
<line x1="5.6" y1="5.8" x2="13.6" y2="14.2" stroke="#dcdcdc" stroke-width="2.9" stroke-linecap="round"/>
<circle cx="4.3" cy="4.5" r="3.3" fill="#dcdcdc"/>
<path d="M4.6,4.8 L0.2,1.6 L3.6,-0.6 L6.2,-0.4 Z" fill="#333"/>
</svg>
<div style="position:absolute;left:1020.5px;top:203px;width:4px;height:2px;background:#e0e0e0;"></div>
<div style="position:absolute;left:1020.5px;top:203px;width:1.6px;height:13px;background:#e0e0e0;"></div>
<div style="position:absolute;left:1020.5px;top:209px;width:4px;height:1.6px;background:#e0e0e0;"></div>
<div style="position:absolute;left:1020.5px;top:214.5px;width:4px;height:1.6px;background:#e0e0e0;"></div>
<div style="position:absolute;left:704.5px;top:220px;width:320px;height:1.2px;background:#1a1a1a;"></div>
<div style="position:absolute;left:704.5px;top:221px;width:320px;height:304px;background:#2e2e2e;"></div>
<svg style="left:0;top:0" width="1024" height="536" viewBox="0 0 1024 536"><defs><radialGradient id="sph" cx="0.38" cy="0.32" r="0.75"><stop offset="0" stop-color="#f8fafc"/><stop offset="0.45" stop-color="#a8b4bc"/><stop offset="1" stop-color="#4a565e"/></radialGradient></defs><g fill="none" stroke="#5c84b4" stroke-width="1.1"><path d="M801.2,339 C801.5,350 805,354.5 813,360 L883,405 C890,409.5 894.6,412 894.8,421"/><path d="M982,339 C981.6,350 977,356 970,362.5 L926,403 C920,408.5 915.6,412 915.3,421"/></g><circle cx="905" cy="441" r="35.6" fill="#4568a2"/><circle cx="905" cy="444" r="25.2" fill="#9a7cd2"/><g fill="none" stroke="#5c84b4" stroke-width="1.1"><path d="M801.2,339 C801.5,350 805,354.5 813,360 L883,405 C890,409.5 894.6,412 894.8,421"/><path d="M982,339 C981.6,350 977,356 970,362.5 L926,403 C920,408.5 915.6,412 915.3,421"/></g><rect x="764.8" y="310.8" width="72.7" height="22.8" rx="3.5" fill="#d2d2d2"/><line x1="776.5999999999999" y1="311.3" x2="773.3999999999999" y2="333.1" stroke="#8e8e8e" stroke-width="0.8"/><line x1="786.6999999999999" y1="311.3" x2="783.4999999999999" y2="333.1" stroke="#8e8e8e" stroke-width="0.8"/><line x1="819.5" y1="311.3" x2="816.3" y2="333.1" stroke="#8e8e8e" stroke-width="0.8"/><line x1="829.6999999999999" y1="311.3" x2="826.4999999999999" y2="333.1" stroke="#8e8e8e" stroke-width="0.8"/><circle cx="801.15" cy="305.40000000000003" r="3.4" fill="#c4c4c4"/><circle cx="801.15" cy="339.0" r="3.4" fill="#c4c4c4"/><rect x="945.9" y="310.8" width="72.7" height="22.8" rx="3.5" fill="#d2d2d2"/><line x1="957.6999999999999" y1="311.3" x2="954.4999999999999" y2="333.1" stroke="#8e8e8e" stroke-width="0.8"/><line x1="967.8" y1="311.3" x2="964.5999999999999" y2="333.1" stroke="#8e8e8e" stroke-width="0.8"/><line x1="1000.6" y1="311.3" x2="997.4" y2="333.1" stroke="#8e8e8e" stroke-width="0.8"/><line x1="1010.8" y1="311.3" x2="1007.5999999999999" y2="333.1" stroke="#8e8e8e" stroke-width="0.8"/><circle cx="982.25" cy="305.40000000000003" r="3.4" fill="#c4c4c4"/><circle cx="982.25" cy="339.0" r="3.4" fill="#c4c4c4"/><ellipse cx="802.2" cy="328.6" rx="6.4" ry="1.5" fill="#9a9a9a"/><circle cx="801.5" cy="321.2" r="7.8" fill="url(#sph)"/><g transform="translate(974.2,313.2)"><ellipse cx="9" cy="16.6" rx="7" ry="1.4" fill="#a4a4a4"/>
<path d="M0.6,4.4 L8.2,1 L15.8,4 L15.4,13.6 L7.6,17.2 L1,14.4 Z" fill="#8a9aa4"/>
<path d="M0.6,4.4 L8.2,1 L15.8,4 L7.8,7.6 Z" fill="#e8ecee"/>
<path d="M0.6,4.4 L7.8,7.6 L7.6,17.2 L1,14.4 Z" fill="#a8c0cc"/>
<path d="M7.8,7.6 L15.8,4 L15.4,13.6 L7.6,17.2 Z" fill="#6c7880"/></g><rect x="875.7" y="419.8" width="59.2" height="8.2" rx="4.1" fill="#bdbdbd"/><rect x="867.3" y="428.7" width="75.4" height="24.8" rx="11" fill="#d2d2d2" stroke="#e8b4ac" stroke-width="1.2"/><rect x="868.7" y="430.1" width="72.6" height="22" rx="9.8" fill="#d2d2d2" stroke="#2a2a2a" stroke-width="0.9"/><path d="M931.6,430.6 L933.4,430.6 Q940.9,432 940.9,441.1 Q940.9,450.2 933.4,451.6 L930.2,451.6 Z" fill="#08a8f0"/><line x1="878.9" y1="430.6" x2="877" y2="451.6" stroke="#8e8e8e" stroke-width="0.8"/><line x1="889.5" y1="430.6" x2="887.3" y2="451.6" stroke="#8e8e8e" stroke-width="0.8"/><line x1="922.7" y1="430.6" x2="920.5" y2="451.6" stroke="#8e8e8e" stroke-width="0.8"/><line x1="932" y1="430.6" x2="930.2" y2="451.6" stroke="#8e8e8e" stroke-width="0.8"/><circle cx="905" cy="461" r="3.4" fill="#c4c4c4"/></svg>
<svg style="left:895px;top:431.8px" width="20.0" height="18.0" viewBox="0 0 20 18">
<ellipse cx="4.2" cy="2.4" rx="3.9" ry="1.7" fill="#98a2ac"/><path d="M0.3,2.4 Q4.2,5.6 8.1,2.4 L8.1,3.2 Q4.2,6.2 0.3,3.2 Z" fill="#7c868e"/>
<path d="M7.4,4 L10.2,6.6" stroke="#d41818" stroke-width="1.7"/><path d="M11.6,8 L8.4,7.4 L10.8,5 Z" fill="#d41818"/>
<path d="M6.8,8.6 L6.8,10.4 Q12.2,13.6 17.6,10.4 L17.6,8.6 Z" fill="#aeb6be"/>
<ellipse cx="12.2" cy="8.6" rx="5.4" ry="2.2" fill="#f8f8f8"/>
<path d="M11.4,11.8 L8.8,14" stroke="#d41818" stroke-width="1.7"/><path d="M7.2,15.4 L8,12.4 L10.4,14.6 Z" fill="#d41818"/>
<ellipse cx="4.6" cy="15.6" rx="4" ry="1.6" fill="#f0f0f0"/><path d="M0.6,15.6 Q4.6,18.4 8.6,15.6 L8.6,16.2 Q4.6,19 0.6,16.2 Z" fill="#b8bec4"/>
</svg>
<svg style="left:0;top:0" width="1024" height="536" viewBox="0 0 1024 536" font-family="'Liberation Sans', sans-serif" xml:space="preserve">
<text x="-6.5" y="3" font-size="8.3" fill="#bdbdbd" textLength="45.5" lengthAdjust="spacingAndGlyphs">Render View</text>
<text x="67.5" y="3" font-size="8.3" fill="#bdbdbd" textLength="58.5" lengthAdjust="spacingAndGlyphs">Composite View</text>
<text x="153.5" y="3" font-size="8.3" fill="#bdbdbd" textLength="56.5" lengthAdjust="spacingAndGlyphs">Motion FX View</text>
<text x="236" y="3" font-size="8.3" fill="#bdbdbd" textLength="86" lengthAdjust="spacingAndGlyphs">Geometry Spreadsheet</text>
<text x="346.5" y="4" font-size="14" fill="#e0e0e0" font-weight="bold">+</text>
<text x="-4.5" y="24" font-size="9.1" fill="#c9c9c9" textLength="66.5" lengthAdjust="spacingAndGlyphs">/out/mantra_ipr</text>
<text x="126.6" y="24" font-size="9.1" fill="#c9c9c9" textLength="52" lengthAdjust="spacingAndGlyphs">ROP Camera</text>
<text x="417.5" y="24" font-size="9.1" fill="#c9c9c9" textLength="24" lengthAdjust="spacingAndGlyphs">Sharp</text>
<text x="477.5" y="25" font-size="8.8" fill="#c9c9c9" textLength="53" lengthAdjust="spacingAndGlyphs">Update Time</text>
<text x="534.6" y="25" font-size="8.3" fill="#e0e0e0" textLength="5.97" lengthAdjust="spacingAndGlyphs" font-family="'DejaVu Sans Mono', 'Liberation Mono', monospace">1</text>
<text x="589" y="25" font-size="8.8" fill="#c9c9c9" textLength="22" lengthAdjust="spacingAndGlyphs">Delay</text>
<text x="615.4" y="25" font-size="8.3" fill="#e0e0e0" textLength="17.91" lengthAdjust="spacingAndGlyphs" font-family="'DejaVu Sans Mono', 'Liberation Mono', monospace">0.1</text>
<text x="682.4" y="24.9" font-size="10.5" fill="#f0f0f0" font-weight="bold">?</text>
<text x="1.8" y="62" font-size="10.5" fill="#22a022">]</text>
<text x="582.4" y="61" font-size="10.8" fill="#c4c4c4" textLength="94.6" lengthAdjust="spacingAndGlyphs">Render Time: 0:00:05</text>
<text x="584" y="75" font-size="10.8" fill="#c4c4c4" textLength="40" lengthAdjust="spacingAndGlyphs">Memory:</text>
<text x="631" y="75" font-size="10.8" fill="#c4c4c4" textLength="46" lengthAdjust="spacingAndGlyphs">626.27 MB</text>
<text x="158.6" y="480.9" font-size="10.3" fill="#9a9a9a" textLength="200.2" lengthAdjust="spacingAndGlyphs">Ctrl+Left to show detailed pixel information.</text>
<text x="584" y="488" font-size="9.4" fill="#a8a8a8" textLength="102" lengthAdjust="spacingAndGlyphs">Non-Commercial Edition</text>
<text x="240.6" y="518" font-size="8.3" fill="#e0e0e0" textLength="35.82" lengthAdjust="spacingAndGlyphs" font-family="'DejaVu Sans Mono', 'Liberation Mono', monospace">Snap 1</text>
<text x="471.4" y="518" font-size="8.3" fill="#e0e0e0" textLength="143.28" lengthAdjust="spacingAndGlyphs" font-family="'DejaVu Sans Mono', 'Liberation Mono', monospace">$HIP/ipr/$SNAPNAME.$F4.$</text>
<text x="613.2" y="518" font-size="8.3" fill="#e0e0e0" font-family="'DejaVu Sans Mono', 'Liberation Mono', monospace">:</text>
<text x="645.2" y="518" font-size="8.3" fill="#484848" textLength="11.94" lengthAdjust="spacingAndGlyphs" font-family="'DejaVu Sans Mono', 'Liberation Mono', monospace">68</text>
<text x="104" y="536" font-size="9.2" fill="#9c9c9c" textLength="9.5" lengthAdjust="spacingAndGlyphs">24</text>
<text x="192.7" y="536" font-size="9.2" fill="#9c9c9c" textLength="9.5" lengthAdjust="spacingAndGlyphs">48</text>
<text x="281.5" y="536" font-size="9.2" fill="#9c9c9c" textLength="9.5" lengthAdjust="spacingAndGlyphs">72</text>
<text x="370" y="536" font-size="9.2" fill="#9c9c9c" textLength="9.5" lengthAdjust="spacingAndGlyphs">96</text>
<text x="460.6" y="536" font-size="9.2" fill="#9c9c9c" textLength="13" lengthAdjust="spacingAndGlyphs">120</text>
<text x="549.7" y="536" font-size="9.2" fill="#9c9c9c" textLength="13" lengthAdjust="spacingAndGlyphs">144</text>
<text x="638.2" y="536" font-size="9.2" fill="#9c9c9c" textLength="13" lengthAdjust="spacingAndGlyphs">168</text>
<text x="727" y="536" font-size="9.2" fill="#9c9c9c" textLength="13" lengthAdjust="spacingAndGlyphs">192</text>
<text x="816" y="536" font-size="9.2" fill="#9c9c9c" textLength="13" lengthAdjust="spacingAndGlyphs">216</text>
<text x="905" y="536" font-size="9.2" fill="#9c9c9c" textLength="4.5" lengthAdjust="spacingAndGlyphs">2</text>
<text x="27" y="538.3" font-size="8.6" fill="#f0f0f0" font-weight="bold">1</text>
<text x="709.5" y="3" font-size="8.3" fill="#bdbdbd" textLength="21.5" lengthAdjust="spacingAndGlyphs" font-style="italic">merge1</text>
<text x="769.5" y="3" font-size="8.3" fill="#bdbdbd" textLength="32.5" lengthAdjust="spacingAndGlyphs">Take List</text>
<text x="830.5" y="3" font-size="8.3" fill="#bdbdbd" textLength="79" lengthAdjust="spacingAndGlyphs">Performance Monitor</text>
<text x="935" y="4" font-size="14" fill="#e0e0e0" font-weight="bold">+</text>
<text x="773" y="24.0" font-size="9.4" fill="#c9c9c9" textLength="13" lengthAdjust="spacingAndGlyphs">obj</text>
<text x="819.8" y="24.0" font-size="9.4" fill="#c9c9c9" textLength="19.6" lengthAdjust="spacingAndGlyphs">geo1</text>
<text x="727.9" y="50" font-size="9.6" fill="#d4d4d4" textLength="26.5" lengthAdjust="spacingAndGlyphs" font-weight="bold">Merge</text>
<text x="760.2" y="50" font-size="8.3" fill="#e0e0e0" textLength="35.82" lengthAdjust="spacingAndGlyphs" font-family="'DejaVu Sans Mono', 'Liberation Mono', monospace">merge1</text>
<text x="723.7" y="70.4" font-size="9.4" fill="#c9c9c9" textLength="160.6" lengthAdjust="spacingAndGlyphs">Input Operators (Drag/Drop to reorder)</text>
<text x="723.7" y="84.5" font-size="9.2" fill="#c9c9c9" textLength="32.5" lengthAdjust="spacingAndGlyphs">sphere1</text>
<text x="723.7" y="98.5" font-size="9.2" fill="#c9c9c9" textLength="19.5" lengthAdjust="spacingAndGlyphs">box1</text>
<text x="710.5" y="167.6" font-size="8.3" fill="#c4c4c4" textLength="35.5" lengthAdjust="spacingAndGlyphs" font-style="italic">/obj/geo1</text>
<text x="777" y="167.6" font-size="8.3" fill="#c4c4c4" textLength="35" lengthAdjust="spacingAndGlyphs">Tree View</text>
<text x="840.6" y="167.6" font-size="8.3" fill="#c4c4c4" textLength="58.8" lengthAdjust="spacingAndGlyphs">Material Palette</text>
<text x="925.5" y="167.6" font-size="8.3" fill="#c4c4c4" textLength="52.8" lengthAdjust="spacingAndGlyphs">Asset Browser</text>
<text x="1004.4" y="169.6" font-size="16" fill="#ececec" font-weight="bold">+</text>
<text x="773" y="189.0" font-size="9.4" fill="#c9c9c9" textLength="13" lengthAdjust="spacingAndGlyphs">obj</text>
<text x="819.8" y="189.0" font-size="9.4" fill="#c9c9c9" textLength="19.6" lengthAdjust="spacingAndGlyphs">geo1</text>
<text x="735" y="213.6" font-size="10.1" fill="#cdcdcd" textLength="17.5" lengthAdjust="spacingAndGlyphs">Add</text>
<text x="765.7" y="213.6" font-size="10.1" fill="#cdcdcd" textLength="17.8" lengthAdjust="spacingAndGlyphs">Edit</text>
<text x="795.7" y="213.6" font-size="10.1" fill="#cdcdcd" textLength="12.3" lengthAdjust="spacingAndGlyphs">Go</text>
<text x="820.5" y="213.6" font-size="10.1" fill="#cdcdcd" textLength="21.5" lengthAdjust="spacingAndGlyphs">View</text>
<text x="854.6" y="213.6" font-size="10.1" fill="#cdcdcd" textLength="24.4" lengthAdjust="spacingAndGlyphs">Tools</text>
<text x="891.4" y="213.6" font-size="10.1" fill="#cdcdcd" textLength="30.6" lengthAdjust="spacingAndGlyphs">Layout</text>
<text x="935.4" y="213.6" font-size="10.1" fill="#cdcdcd" textLength="20.6" lengthAdjust="spacingAndGlyphs">Help</text>
<text x="815.8" y="247.9" font-size="17.4" fill="#464646" textLength="187.7" lengthAdjust="spacingAndGlyphs">Non-Commercial Edition</text>
<text x="1015.8" y="248.6" font-size="19" fill="#595959" font-weight="bold">G</text>
<text x="845.3" y="327.8" font-size="14.5" fill="#d2d2d2" textLength="52.3" lengthAdjust="spacingAndGlyphs">sphere1</text>
<text x="948.8" y="445.7" font-size="14.5" fill="#d2d2d2" textLength="49.5" lengthAdjust="spacingAndGlyphs">merge1</text>
</svg>
</div></body></html>
